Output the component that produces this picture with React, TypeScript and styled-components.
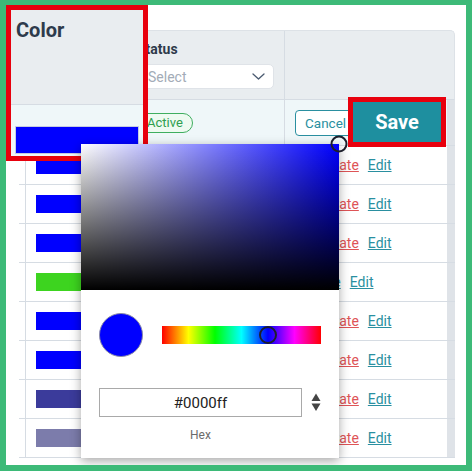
import styled, { createGlobalStyle } from 'styled-components';

const GlobalStyle = createGlobalStyle`
    html, body {
        margin: 0;
        padding: 0;
    }
    body {
        background: #3dba78;
        font-family: Roboto, "Liberation Sans", Arial, sans-serif;
    }
    #root {
        padding: 5px 6px 6px 6px;
    }
`;

const Panel = styled.main`
    position: relative;
    width: 460px;
    height: 460px;
    background: #ffffff;
    overflow: hidden;
`;

const Table = styled.div`
    width: 436px;
    margin: 25px 0 0 13px;
`;

const HeaderRow = styled.div`
    display: grid;
    grid-template-columns: 7px 101px 158px 170px;
    height: 70px;
    box-sizing: border-box;
    background: #e9edf0;
    border-top: 1px solid #dde2e7;
    border-right: 1px solid #dde2e7;
    border-bottom: 1px solid #d6dce3;
    border-radius: 5px 5px 0 0;
`;

const HeaderCell = styled.div<{ $last?: boolean }>`
    display: flex;
    flex-direction: column;
    gap: 5px;
    padding: 8px 10px;
    box-sizing: border-box;
    border-right: ${(p) => (p.$last ? 'none' : '1px solid #d6dce3')};
    min-width: 0;
`;

const HeaderTitle = styled.span`
    font-size: 14px;
    line-height: 20px;
    font-weight: 700;
    color: #2e3a4b;
`;

const SelectBox = styled.div`
    display: flex;
    align-items: center;
    justify-content: space-between;
    height: 25px;
    box-sizing: border-box;
    padding: 0 8px 0 10px;
    background: #ffffff;
    border: 1px solid #dfe3e8;
    border-radius: 5px;
    font-size: 14px;
    color: #a3acb7;
`;

const Row = styled.div<{ $editing?: boolean }>`
    display: grid;
    grid-template-columns: 7px 101px 158px 162px 8px;
    height: ${(p) => (p.$editing ? '46px' : '39px')};
    box-sizing: border-box;
    background: ${(p) => (p.$editing ? '#eff7f9' : '#ffffff')};
    border-bottom: 1px solid #d6dce3;
`;

const Cell = styled.div<{ $pad?: number }>`
    display: flex;
    align-items: center;
    gap: 9px;
    padding-left: ${(p) => p.$pad ?? 10}px;
    border-right: 1px solid #d6dce3;
    overflow: hidden;
    white-space: nowrap;
`;

const ActionCell = styled.div<{ $pad?: number }>`
    display: flex;
    align-items: center;
    gap: 9px;
    padding-left: ${(p) => p.$pad ?? 8}px;
    overflow: hidden;
    white-space: nowrap;
`;

const ScrollTrack = styled.div`
    background: #dfe3e8;
`;

const ColorBar = styled.div<{ $color: string }>`
    width: 81px;
    height: 18px;
    background: ${(p) => p.$color};
`;

const Badge = styled.span<{ $active: boolean }>`
    display: inline-flex;
    align-items: center;
    height: 20px;
    box-sizing: border-box;
    padding: 0 9px;
    border-radius: 10px;
    font-size: 13px;
    border: 1px solid ${(p) => (p.$active ? '#3fae5f' : '#c9ced6')};
    background: ${(p) => (p.$active ? '#eefaf1' : '#f3f4f6')};
    color: ${(p) => (p.$active ? '#2f9e4f' : '#6b7280')};
`;

const LinkText = styled.a<{ $danger?: boolean }>`
    font-size: 14px;
    color: ${(p) => (p.$danger ? '#de5457' : '#2a8fa0')};
    text-decoration: underline;
    cursor: pointer;
`;

const OutlineButton = styled.button`
    height: 26px;
    padding: 0 9px;
    background: #ffffff;
    border: 1px solid #2a8fa0;
    border-radius: 4px;
    font-family: inherit;
    font-size: 13.5px;
    color: #2a8fa0;
`;

/* callouts drawn over the table */

const ColorCallout = styled.div`
    position: absolute;
    left: 0;
    top: 0;
    width: 142px;
    height: 156px;
    box-sizing: border-box;
    border: 5px solid #e8000d;
    display: flex;
    flex-direction: column;
    overflow: hidden;
`;

const CalloutHead = styled.div`
    height: 95px;
    box-sizing: border-box;
    padding: 8px 5px;
    background: #e9edf0;
    border-bottom: 1px solid #d6dce3;
    font-size: 20px;
    line-height: 24px;
    font-weight: 700;
    color: #2e3b4c;
`;

const CalloutBody = styled.div`
    flex: 1;
    padding: 21px 4px 0 4px;
    background: #eff7f9;
`;

const CalloutBar = styled.div`
    height: 28px;
    box-sizing: border-box;
    background: #0000ff;
    border: 1px solid #c6cbe2;
`;

const SaveCallout = styled.button`
    position: absolute;
    left: 342px;
    top: 92px;
    width: 98px;
    height: 50px;
    box-sizing: border-box;
    border: 5px solid #e8000d;
    background: #1e8f9f;
    font-family: inherit;
    font-size: 20px;
    font-weight: 700;
    color: #ffffff;
    padding: 0;
`;

/* colour picker popover */

const Picker = styled.div`
    position: absolute;
    left: 75px;
    top: 139px;
    width: 258px;
    height: 314px;
    background: #ffffff;
    box-shadow: 0 3px 10px rgba(0, 0, 0, 0.35);
`;

const Saturation = styled.div`
    position: relative;
    height: 146px;
    background: linear-gradient(to top, #000000, rgba(0, 0, 0, 0)),
        linear-gradient(to right, #ffffff, #0000ff);
`;

const Handle = styled.span<{ $size: number }>`
    position: absolute;
    width: ${(p) => p.$size}px;
    height: ${(p) => p.$size}px;
    box-sizing: border-box;
    border: 2px solid #1d1f2c;
    border-radius: 50%;
    transform: translate(-50%, -50%);
`;

const PickerBody = styled.div`
    padding: 23px 18px 0 18px;
`;

const SwatchRow = styled.div`
    display: flex;
    align-items: center;
    gap: 19px;
`;

const Swatch = styled.div`
    width: 44px;
    height: 44px;
    box-sizing: border-box;
    border-radius: 50%;
    background: #0000ff;
    border: 1px solid #8a8aa8;
    flex: none;
`;

const HueSlider = styled.div`
    position: relative;
    flex: 1;
    height: 18px;
    background: linear-gradient(
        to right,
        #ff0000 0%,
        #ffff00 16.66%,
        #00ff00 33.33%,
        #00ffff 50%,
        #0000ff 66.66%,
        #ff00ff 83.33%,
        #ff0000 100%
    );
`;

const HexRow = styled.div`
    display: flex;
    align-items: center;
    gap: 9px;
    margin-top: 31px;
`;

const HexField = styled.div`
    display: flex;
    flex-direction: column;
    align-items: center;
    width: 204px;
`;

const HexInput = styled.div`
    width: 100%;
    height: 29px;
    box-sizing: border-box;
    border: 1px solid #a9a9a9;
    display: flex;
    align-items: center;
    justify-content: center;
    font-size: 15px;
    color: #222222;
`;

const HexLabel = styled.span`
    margin-top: 11px;
    font-size: 12px;
    color: #6b6b6b;
`;

const HexSpacer = styled.div`
    height: 29px;
    display: flex;
    align-items: center;
    align-self: flex-start;
`;

const rows = [
    { color: '#0000ff', active: true },
    { color: '#0000ff', active: true },
    { color: '#0000ff', active: true },
    { color: '#3dd41f', active: false },
    { color: '#0000ff', active: true },
    { color: '#0000ff', active: true },
    { color: '#3b3b9b', active: true },
    { color: '#7c7cab', active: true },
];

function Chevron() {
    return (
        <svg width="13" height="7" viewBox="0 0 13 7" fill="none">
            <path d="M1 1l5.5 5 5.5-5" stroke="#4a5a70" strokeWidth="1.3" strokeLinecap="round" strokeLinejoin="round" />
        </svg>
    );
}

function Stepper() {
    return (
        <svg width="10" height="19" viewBox="0 0 10 19">
            <path d="M5 0.5L9.5 8H0.5z" fill="#444444" />
            <path d="M0.5 10.5H9.5L5 18z" fill="#444444" />
        </svg>
    );
}

function App() {
    return (
        <>
            <GlobalStyle />
            <Panel>
                <Table>
                    <HeaderRow>
                        <HeaderCell />
                        <HeaderCell>
                            <HeaderTitle>Color</HeaderTitle>
                        </HeaderCell>
                        <HeaderCell>
                            <HeaderTitle>Status</HeaderTitle>
                            <SelectBox>
                                Select
                                <Chevron />
                            </SelectBox>
                        </HeaderCell>
                        <HeaderCell $last />
                    </HeaderRow>

                    <Row $editing>
                        <Cell $pad={0} />
                        <Cell>
                            <ColorBar $color="#0000ff" />
                        </Cell>
                        <Cell>
                            <Badge $active>Active</Badge>
                        </Cell>
                        <ActionCell $pad={10}>
                            <OutlineButton>Cancel</OutlineButton>
                        </ActionCell>
                        <ScrollTrack />
                    </Row>

                    {rows.map((r, i) => (
                        <Row key={i}>
                            <Cell $pad={0} />
                            <Cell>
                                <ColorBar $color={r.color} />
                            </Cell>
                            <Cell>
                                <Badge $active={r.active}>{r.active ? 'Active' : 'Inactive'}</Badge>
                            </Cell>
                            <ActionCell>
                                {r.active ? (
                                    <LinkText $danger>Deactivate</LinkText>
                                ) : (
                                    <LinkText>Restore</LinkText>
                                )}
                                <LinkText>Edit</LinkText>
                            </ActionCell>
                            <ScrollTrack />
                        </Row>
                    ))}
                </Table>

                <ColorCallout>
                    <CalloutHead>Color</CalloutHead>
                    <CalloutBody>
                        <CalloutBar />
                    </CalloutBody>
                </ColorCallout>

                <SaveCallout>Save</SaveCallout>

                <Picker>
                    <Saturation>
                        <Handle $size={17} style={{ left: '100%', top: 0 }} />
                    </Saturation>
                    <PickerBody>
                        <SwatchRow>
                            <Swatch />
                            <HueSlider>
                                <Handle $size={18} style={{ left: '66.66%', top: '50%' }} />
                            </HueSlider>
                        </SwatchRow>
                        <HexRow>
                            <HexField>
                                <HexInput>#0000ff</HexInput>
                                <HexLabel>Hex</HexLabel>
                            </HexField>
                            <HexSpacer>
                                <Stepper />
                            </HexSpacer>
                        </HexRow>
                    </PickerBody>
                </Picker>
            </Panel>
        </>
    );
}

export default App;
